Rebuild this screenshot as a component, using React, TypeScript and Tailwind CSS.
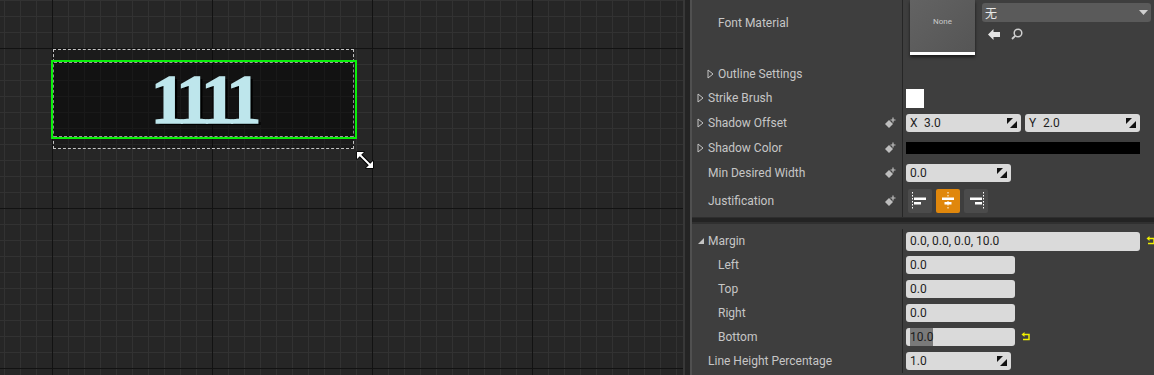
import React from 'react';

const FONT = { fontFamily: 'Roboto, "Noto Sans", "Noto Sans CJK SC", sans-serif' };

function GridCanvas() {
  return (
    <svg className="absolute inset-0" width="683" height="375">
      <defs>
        <pattern id="minor" x="4" y="0" width="16" height="16" patternUnits="userSpaceOnUse">
          <path d="M0.5 0 V16 M0 0.5 H16" stroke="#323232" strokeWidth="1" fill="none" />
        </pattern>
        <pattern id="major" x="52" y="48" width="160" height="160" patternUnits="userSpaceOnUse">
          <path d="M0.5 0 V160 M0 0.5 H160" stroke="#121212" strokeWidth="1" fill="none" />
        </pattern>
      </defs>
      <rect width="683" height="375" fill="url(#minor)" />
      <rect width="683" height="375" fill="url(#major)" />
    </svg>
  );
}

function ResizeCursor() {
  return (
    <svg width="18" height="18" viewBox="0 0 18 18">
      <g stroke="#000" strokeWidth="1.5" strokeLinejoin="round">
        <path d="M1 1 H8 L1 8 Z" fill="#000" />
        <path d="M17 17 H10 L17 10 Z" fill="#000" />
        <path d="M4 4 L14 14" strokeWidth="4" />
      </g>
      <path d="M1 1 H8 L1 8 Z" fill="#fff" />
      <path d="M17 17 H10 L17 10 Z" fill="#fff" />
      <path d="M4 4 L14 14" stroke="#fff" strokeWidth="2" />
    </svg>
  );
}

function Triangle({ open }: { open?: boolean }) {
  if (open) {
    return (
      <svg width="8" height="8" viewBox="0 0 8 8">
        <path d="M7 1 V7 H1 Z" fill="#c4c4c4" />
      </svg>
    );
  }
  return (
    <svg width="7" height="10" viewBox="0 0 7 10">
      <path d="M1 1 L6 5 L1 9 Z" fill="none" stroke="#c4c4c4" strokeWidth="1" />
    </svg>
  );
}

function KeyIcon() {
  return (
    <svg width="12" height="12" viewBox="0 0 12 12">
      <path d="M1 7 L5 3 L9 7 L5 11 Z" fill="#bdbdbd" />
      <path d="M9 0.5 V5.5 M6.5 3 H11.5" stroke="#bdbdbd" strokeWidth="1.2" />
    </svg>
  );
}

function Spin() {
  return (
    <svg width="10" height="10" viewBox="0 0 10 10">
      <path d="M0 0 H6 L0 6 Z" fill="#111" />
      <path d="M10 10 H3 L10 3 Z" fill="#111" />
    </svg>
  );
}

function ResetIcon() {
  return (
    <svg width="10" height="10" viewBox="0 0 10 10">
      <path d="M3 2.5 H8 V7.5 H2" fill="none" stroke="#f0f000" strokeWidth="1.5" />
      <path d="M0.5 2.5 L3.5 0 V5 Z" fill="#f0f000" />
    </svg>
  );
}

function Field({ w, children, spin }: { w: string; children: React.ReactNode; spin?: boolean }) {
  return (
    <div className={`${w} h-[18px] rounded-[3px] bg-[#dadada] text-[#1e1e1e] text-[12px] flex items-center px-[4px] justify-between shrink-0`}>
      <div className="flex items-center">{children}</div>
      {spin && <Spin />}
    </div>
  );
}

function Row({
  h,
  label,
  indent = 0,
  expander,
  keyed,
  children,
  labelClass = 'items-center',
}: {
  h: string;
  label: string;
  indent?: number;
  expander?: 'closed' | 'open';
  keyed?: boolean;
  children?: React.ReactNode;
  labelClass?: string;
}) {
  return (
    <div className={`${h} flex shrink-0`}>
      <div className={`w-[210px] shrink-0 flex ${labelClass} relative`}>
        <div className={indent ? 'w-[15px] shrink-0' : 'w-[5px] shrink-0'} />
        <div className="w-[11px] shrink-0 flex items-center">
          {expander === 'closed' && <Triangle />}
          {expander === 'open' && <Triangle open />}
        </div>
        <span className="text-[12px] text-[#c6c6c6] flex-1">{label}</span>
        {keyed && (
          <div className="w-[16px] mr-[4px] flex justify-center">
            <KeyIcon />
          </div>
        )}
      </div>
      <div className="w-px shrink-0 bg-[#262626]" />
      <div className="flex-1 min-w-0 flex items-center pl-[3px]">{children}</div>
    </div>
  );
}

function JustifyBtn({ kind, active }: { kind: 'l' | 'c' | 'r'; active?: boolean }) {
  return (
    <div className={`w-[24px] h-[24px] rounded-[2px] flex items-center justify-center ${active ? 'bg-[#e0870c]' : 'bg-[#4b4b4b]'}`}>
      <svg width="20" height="20" viewBox="0 0 20 20">
        {kind === 'l' && (
          <g>
            <path d="M2.5 1 V19" stroke="#fff" strokeWidth="1" strokeDasharray="1.5 1.5" />
            <rect x="4" y="6.5" width="12" height="2.5" fill="#fff" />
            <rect x="4" y="11" width="7" height="2.5" fill="#fff" />
          </g>
        )}
        {kind === 'c' && (
          <g>
            <path d="M10 1 V19" stroke="#fff" strokeWidth="1" strokeDasharray="1.5 1.5" />
            <rect x="4" y="6.5" width="12" height="2.5" fill="#fff" />
            <rect x="6.5" y="11" width="7" height="2.5" fill="#fff" />
          </g>
        )}
        {kind === 'r' && (
          <g>
            <path d="M17.5 1 V19" stroke="#fff" strokeWidth="1" strokeDasharray="1.5 1.5" />
            <rect x="4" y="6.5" width="12" height="2.5" fill="#fff" />
            <rect x="9" y="11" width="7" height="2.5" fill="#fff" />
          </g>
        )}
      </svg>
    </div>
  );
}

export default function App() {
  return (
    <div className="w-[1154px] h-[375px] flex overflow-hidden bg-[#3e3e3e]" style={FONT}>
      {/* Designer canvas */}
      <div className="w-[683px] shrink-0 h-full relative overflow-hidden bg-[#262626]">
        <GridCanvas />
        <div className="absolute left-[53px] top-[49px] w-[301px] h-[100px] border border-dashed border-[#c4c4c4] bg-[rgba(0,0,0,0.28)]" />
        <div className="absolute left-[51px] top-[60px] w-[306px] h-[79px] border-2 border-[#0af00a] bg-[rgba(0,0,0,0.3)]">
          <div className="absolute left-[1px] right-[2px] top-[0px] bottom-[0px] border-y border-dashed border-[#9a9a9a]" />
          <div className="absolute inset-0 flex items-center justify-center">
            <span
              className="text-[70px] font-bold text-[#bee6ec] tracking-[-6px] leading-none pr-[2px]"
              style={{
                fontFamily: '"Liberation Serif", "DejaVu Serif", serif',
                textShadow: '3px 2px 0 #000',
                WebkitTextStroke: '1.5px #bee6ec',
              }}
            >
              1111
            </span>
          </div>
        </div>
        <div className="absolute left-[356px] top-[151px]">
          <ResizeCursor />
        </div>
      </div>

      {/* Splitter */}
      <div className="w-[2px] shrink-0 bg-[#383838]" />
      <div className="w-[5px] shrink-0 bg-[#242424]" />
      <div className="w-[2px] shrink-0 bg-[#505050]" />

      {/* Details panel */}
      <div className="flex-1 min-w-0 flex flex-col bg-[#3e3e3e]">
        <Row h="h-[62px]" label="Font Material" indent={1} labelClass="items-start pt-[14px]">
          <div className="flex self-start gap-[7px]">
            <div className="ml-[4px] w-[65px] h-[55px] flex flex-col shadow-[0_2px_3px_rgba(0,0,0,0.6)]">
              <div className="flex-1 bg-[linear-gradient(135deg,#636363,#555555)] flex items-center justify-center pb-[8px]">
                <span className="text-[8px] text-[#c8c8c8]">None</span>
              </div>
              <div className="h-[3px] bg-white" />
            </div>
            <div className="flex flex-col pt-[3px]">
              <div className="w-[169px] h-[19px] rounded-[3px] bg-[#5a5a5a] flex items-center justify-between px-[3px]">
                <span className="text-[12px] text-[#e8e8e8]" style={{ fontFamily: '"Noto Sans CJK SC", sans-serif' }}>无</span>
                <svg width="9" height="6" viewBox="0 0 9 6">
                  <path d="M0 0 H9 L4.5 5 Z" fill="#d0d0d0" />
                </svg>
              </div>
              <div className="flex items-center gap-[10px] pl-[6px] pt-[6px]">
                <svg width="13" height="11" viewBox="0 0 13 11">
                  <path d="M0 5.5 L5.5 0 V3 H12 V8 H5.5 V11 Z" fill="#e6e6e6" />
                </svg>
                <svg width="12" height="12" viewBox="0 0 12 12">
                  <circle cx="7" cy="5" r="3.8" fill="none" stroke="#cfcfcf" strokeWidth="1.5" />
                  <path d="M4.2 7.8 L1 11" stroke="#cfcfcf" strokeWidth="1.8" />
                </svg>
              </div>
            </div>
          </div>
        </Row>
        <Row h="h-[24px]" label="Outline Settings" indent={1} expander="closed" />
        <Row h="h-[24px]" label="Strike Brush" expander="closed">
          <div className="w-[18px] h-[19px] bg-white" />
        </Row>
        <Row h="h-[25px]" label="Shadow Offset" expander="closed" keyed>
          <div className="flex gap-[4px]">
            <Field w="w-[115px]" spin>
              <span className="w-[14px]">X</span>
              <span>3.0</span>
            </Field>
            <Field w="w-[115px]" spin>
              <span className="w-[14px]">Y</span>
              <span>2.0</span>
            </Field>
          </div>
        </Row>
        <Row h="h-[25px]" label="Shadow Color" expander="closed" keyed>
          <div className="w-[234px] h-[12px] bg-black" />
        </Row>
        <Row h="h-[25px]" label="Min Desired Width" keyed>
          <Field w="w-[105px]" spin>
            <span>0.0</span>
          </Field>
        </Row>
        <Row h="h-[32px]" label="Justification" keyed>
          <div className="flex gap-[4px] pl-[2px]">
            <JustifyBtn kind="l" />
            <JustifyBtn kind="c" active />
            <JustifyBtn kind="r" />
          </div>
        </Row>

        {/* section break */}
        <div className="h-[12px] shrink-0 flex flex-col">
          <div className="h-[1px] bg-[#2e2e2e]" />
          <div className="h-[4px] bg-[#232323]" />
          <div className="h-[2px] bg-[#303030]" />
        </div>

        <Row h="h-[24px]" label="Margin" expander="open">
          <div className="flex items-center gap-[6px]">
            <div className="w-[234px] h-[19px] rounded-[3px] bg-[#dadada] text-[#1e1e1e] text-[12px] flex items-center px-[4px]">
              0.0, 0.0, 0.0, 10.0
            </div>
            <ResetIcon />
          </div>
        </Row>
        <Row h="h-[24px]" label="Left" indent={1}>
          <Field w="w-[109px]"><span>0.0</span></Field>
        </Row>
        <Row h="h-[24px]" label="Top" indent={1}>
          <Field w="w-[109px]"><span>0.0</span></Field>
        </Row>
        <Row h="h-[24px]" label="Right" indent={1}>
          <Field w="w-[109px]"><span>0.0</span></Field>
        </Row>
        <Row h="h-[24px]" label="Bottom" indent={1}>
          <div className="flex items-center gap-[6px]">
            <Field w="w-[109px]">
              <span className="bg-[#7a7a7a] text-[#1a1a1a]">10.0</span>
            </Field>
            <ResetIcon />
          </div>
        </Row>
        <Row h="h-[24px]" label="Line Height Percentage">
          <Field w="w-[105px]" spin>
            <span>1.0</span>
          </Field>
        </Row>
      </div>
    </div>
  );
}
